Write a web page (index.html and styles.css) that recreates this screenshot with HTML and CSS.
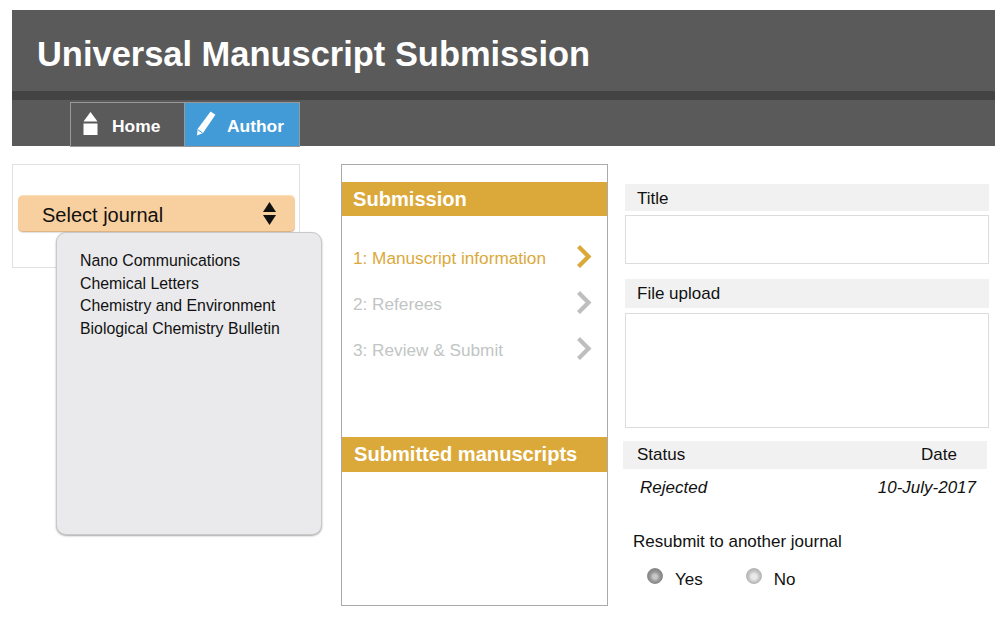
FILE: index.html
```html
<!DOCTYPE html>
<html lang="en">
<head>
<meta charset="utf-8">
<title>Universal Manuscript Submission</title>
<link rel="stylesheet" href="styles.css">
</head>
<body>
<header class="header">
  <h1 class="brand">Universal Manuscript Submission</h1>
  <div class="band"></div>
  <nav class="nav">
    <a class="tab tab-home">
      <svg class="icon-home" viewBox="0 0 15 23" aria-hidden="true"><path d="M7.5 0 14.500 9.500H.5Z"/><rect x="0.5" y="11.500" width="14" height="11.500"/></svg>
      <span>Home</span>
    </a>
    <a class="tab tab-author">
      <svg class="icon-pen" viewBox="0 0 20 25" aria-hidden="true"><path d="M14.6.6 19.4 3.8 7 22 1 24.6 1.6 18Z"/><path class="pen-cut" d="M1.9 18.8 6.6 22" /></svg>
      <span>Author</span>
    </a>
  </nav>
</header>
<main class="main">
  <section class="left">
    <div class="journal-box">
      <div class="select">
        <span class="select-text">Select journal</span>
        <svg class="updown" viewBox="0 0 13 23" aria-hidden="true"><path d="M6.5 0 13 10H0Z"/><path d="M0 13H13L6.5 23Z"/></svg>
      </div>
    </div>
    <ul class="menu">
      <li>Nano Communications</li>
      <li>Chemical Letters</li>
      <li>Chemistry and Environment</li>
      <li>Biological Chemistry Bulletin</li>
    </ul>
  </section>
  <section class="middle">
    <h2 class="bar">Submission</h2>
    <ol class="steps">
      <li class="step active"><span>1: Manuscript information</span><svg class="chev" viewBox="0 0 16 23" aria-hidden="true"><path d="M1 3 4 0 15.5 11.500 4 23 1 20 9.500 11.500Z"/></svg></li>
      <li class="step"><span>2: Referees</span><svg class="chev" viewBox="0 0 16 23" aria-hidden="true"><path d="M1 3 4 0 15.5 11.500 4 23 1 20 9.500 11.500Z"/></svg></li>
      <li class="step"><span>3: Review &amp; Submit</span><svg class="chev" viewBox="0 0 16 23" aria-hidden="true"><path d="M1 3 4 0 15.5 11.500 4 23 1 20 9.500 11.500Z"/></svg></li>
    </ol>
    <h2 class="bar bar-second">Submitted manuscripts</h2>
  </section>
  <section class="right">
    <div class="label label-title">Title</div>
    <div class="field field-title"></div>
    <div class="label label-file">File upload</div>
    <div class="field field-file"></div>
    <div class="status-head"><span>Status</span><span>Date</span></div>
    <div class="status-row"><span>Rejected</span><span>10-July-2017</span></div>
    <p class="resubmit">Resubmit to another journal</p>
    <div class="radios">
      <span class="radio-item item-yes"><i class="radio radio-on"></i>Yes</span>
      <span class="radio-item"><i class="radio"></i>No</span>
    </div>
  </section>
</main>
</body>
</html>
```
FILE: styles.css
```css
* { box-sizing: border-box; }
html, body { margin: 0; padding: 0; }
body {
  width: 1000px;
  height: 621px;
  overflow: hidden;
  background: #fff;
  color: #111;
  font-family: "Liberation Sans", Arial, sans-serif;
  padding: 10px 5px 0 12px;
}
.header {
  height: 136px;
  background: #5a5a5a;
  display: flex;
  flex-direction: column;
}
.brand {
  flex: none;
  margin: 0;
  height: 81px;
  padding: 24px 0 0 25px;
  font-size: 34.450px;
  line-height: 40px;
  font-weight: 700;
  color: #fff;
}
.band { flex: none; height: 9px; background: #434343; }
.nav {
  display: flex;
  flex: none;
  margin: 2px 0 0 58px;
  height: 45px;
  width: 230px;
  border: 1px solid #999;
}
.tab {
  display: flex;
  align-items: center;
  color: #fff;
  font-weight: 700;
  font-size: 17.400px;
}
.tab span { padding-top: 4px; }
.tab-home { width: 114px; padding-left: 12px; gap: 14px; border-right: 1px solid #999; }
.tab-author { flex: 1; background: #429bd7; padding-left: 11px; gap: 11px; }
.icon-home { width: 15px; height: 23px; fill: #fff; margin-top: -3px; }
.icon-pen { width: 20px; height: 25px; fill: #fff; margin-top: -3px; }
.pen-cut { fill: none; stroke: #429bd7; stroke-width: 1; }
.main {
  display: flex;
  margin-top: 18px;
  align-items: flex-start;
}
.left { position: relative; width: 288px; }
.journal-box {
  height: 104px;
  border: 1px solid #e2e2e2;
  padding: 30px 4px 0 5px;
}
.select {
  height: 37px;
  background: #f8cf9f;
  border-top: 1px solid #fbe0b8;
  border-bottom: 1px solid #e0b585;
  border-radius: 5px;
  box-shadow: 0 1px 1px rgba(0,0,0,.12);
  display: flex;
  align-items: center;
  justify-content: space-between;
  padding: 0 19px 0 24px;
  font-size: 20px;
  color: #111;
}
.select-text { padding-top: 4px; }
.updown { width: 13px; height: 23px; fill: #111; }
.menu {
  position: absolute;
  left: 44px;
  top: 68px;
  width: 266px;
  height: 303px;
  margin: 0;
  padding: 17px 0 0 23px;
  list-style: none;
  background: #eaeaec;
  border: 1px solid #c9c9c9;
  border-radius: 10px;
  box-shadow: 0 1px 2px rgba(0,0,0,.35);
  font-size: 15.850px;
  line-height: 22.700px;
}
.middle {
  width: 267px;
  height: 442px;
  margin-left: 41px;
  border: 1px solid #aaa;
  padding-top: 17px;
}
.bar {
  margin: 0;
  height: 34px;
  background: #dba93a;
  color: #fff;
  font-size: 20.100px;
  line-height: 34px;
  font-weight: 700;
  padding-left: 11px;
}
.bar-second { margin-top: 64px; height: 35px; padding-left: 12px; }
.steps { list-style: none; margin: 0; padding: 19px 15px 0 11px; }
.step {
  height: 46px;
  display: flex;
  align-items: center;
  justify-content: space-between;
  font-size: 17.200px;
  color: #c1c5c4;
}
.step.active { color: #dba93a; }
.chev { width: 16px; height: 23px; fill: #bebebe; margin-top: -4px; }
.active .chev { fill: #dba93a; }
.right { width: 364px; margin-left: 17px; padding-top: 20px; font-size: 17px; }
.label { height: 27px; line-height: 29px; background: #f1f1f1; padding-left: 12px; }
.label-file { height: 29px; line-height: 30px; margin-top: 15px; }
.field { border: 1px solid #dcdcdc; margin-top: 4px; }
.field-title { height: 49px; }
.field-file { height: 115px; margin-top: 5px; }
.status-head {
  margin: 13px 2px 0 -2px;
  height: 28px;
  background: #f1f1f1;
  display: flex;
  justify-content: space-between;
  line-height: 27px;
  padding: 0 30px 0 14px;
}
.status-row {
  display: flex;
  justify-content: space-between;
  font-style: italic;
  line-height: 38px;
  padding: 0 13px 0 15px;
}
.resubmit { margin: 25px 0 0 8px; line-height: 20px; }
.radios { display: flex; margin: 18px 0 0 22px; line-height: 20px; }
.radio-item { display: flex; align-items: center; gap: 12px; }
.item-yes { margin-right: 43px; }
.radio {
  width: 16px;
  height: 16px;
  margin-top: -9px;
  border-radius: 50%;
  background: radial-gradient(circle at 50% 55%, #c8c8c8 0 20%, #9a9a9a 45%, #6f6f6f 100%);
  border: 1px solid #8a8a8a;
}
.radio:not(.radio-on) {
  background: radial-gradient(circle at 50% 55%, #e9e9e9 0 25%, #c2c2c2 55%, #a9a9a9 100%);
  border-color: #b5b5b5;
}
```
